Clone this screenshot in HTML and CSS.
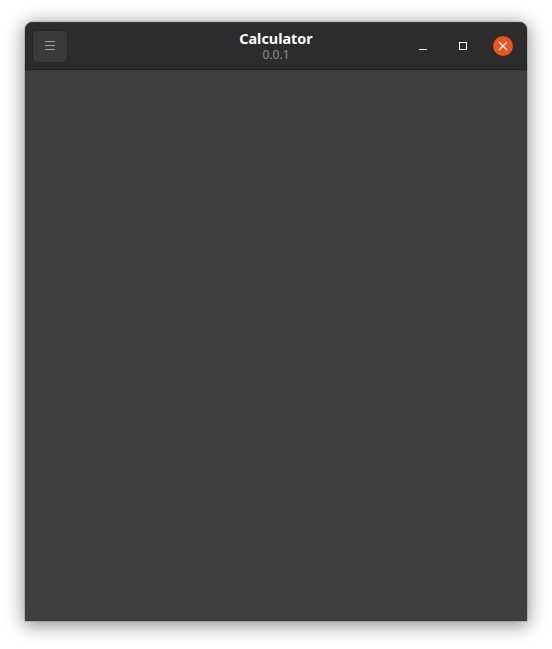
FILE: index.html
```html
<!DOCTYPE html>
<html lang="en">
<head>
<meta charset="utf-8">
<title>Calculator</title>
<link rel="stylesheet" href="styles.css">
</head>
<body>
<div class="window">
  <header class="titlebar">
    <div class="side side-start">
      <button class="menu-btn" aria-label="Menu">
        <svg width="12" height="10" viewBox="0 0 12 10"><path d="M1 0.5h10M1 4.5h10M1 8.5h10" stroke="#a0a09e" stroke-width="1" fill="none"/></svg>
      </button>
    </div>
    <div class="titles">
      <div class="title">Calculator</div>
      <div class="subtitle">0.0.1</div>
    </div>
    <div class="side side-end">
      <button class="win-btn" aria-label="Minimize">
        <svg width="10" height="10" viewBox="0 0 10 10"><path d="M1 8.5h8" stroke="#fff" stroke-width="1" fill="none"/></svg>
      </button>
      <button class="win-btn" aria-label="Maximize">
        <svg width="10" height="10" viewBox="0 0 10 10"><rect x="1.5" y="1.5" width="7" height="7" stroke="#fff" stroke-width="1" fill="none"/></svg>
      </button>
      <button class="win-btn close" aria-label="Close">
        <svg width="10" height="10" viewBox="0 0 10 10"><path d="M1 1l8 8M9 1l-8 8" stroke="#fff" stroke-width="1.2" fill="none"/></svg>
      </button>
    </div>
  </header>
  <main class="content"></main>
</div>
</body>
</html>
```
FILE: styles.css
```css
html, body {
  margin: 0;
  height: 100%;
  background: #fff;
  overflow: hidden;
}
body {
  padding: 22px 25px 28px;
  box-sizing: border-box;
  font-family: "Noto Sans", "Open Sans", sans-serif;
}
.window {
  height: 599px;
  display: flex;
  flex-direction: column;
  border-radius: 8px 8px 0 0;
  background: #3d3d3d;
  box-shadow: 0 3px 18px 2px rgba(0, 0, 0, 0.42), 0 0 0 1px rgba(0, 0, 0, 0.12);
  overflow: hidden;
}
.titlebar {
  flex: none;
  box-sizing: border-box;
  height: 48px;
  display: grid;
  grid-template-columns: 1fr auto 1fr;
  align-items: center;
  background: #2c2c2c;
  border-top: 1px solid #3a3a3a;
  border-bottom: 1px solid #1f1f1f;
}
.side {
  display: flex;
  align-items: center;
}
.side-start { padding-left: 7px; }
.side-end {
  justify-content: flex-end;
  padding-right: 14px;
  gap: 20px;
}
.menu-btn {
  width: 36px;
  height: 33px;
  padding: 0;
  display: flex;
  align-items: center;
  justify-content: center;
  background: #3a3a3a;
  border: 1px solid #252525;
  border-radius: 5px;
}
.titles {
  text-align: center;
  padding-top: 1px;
}
.title {
  color: #fff;
  font-size: 14.4px;
  font-weight: 700;
  line-height: 16px;
}
.subtitle {
  color: #8e8e8c;
  font-size: 12px;
  line-height: 14px;
  margin-top: 1px;
}
.win-btn {
  width: 20px;
  height: 20px;
  padding: 0;
  display: flex;
  align-items: center;
  justify-content: center;
  background: none;
  border: 0;
  border-radius: 50%;
}
.close { background: #e95420; }
.content {
  flex: 1;
  background: #3d3d3d;
}
```
